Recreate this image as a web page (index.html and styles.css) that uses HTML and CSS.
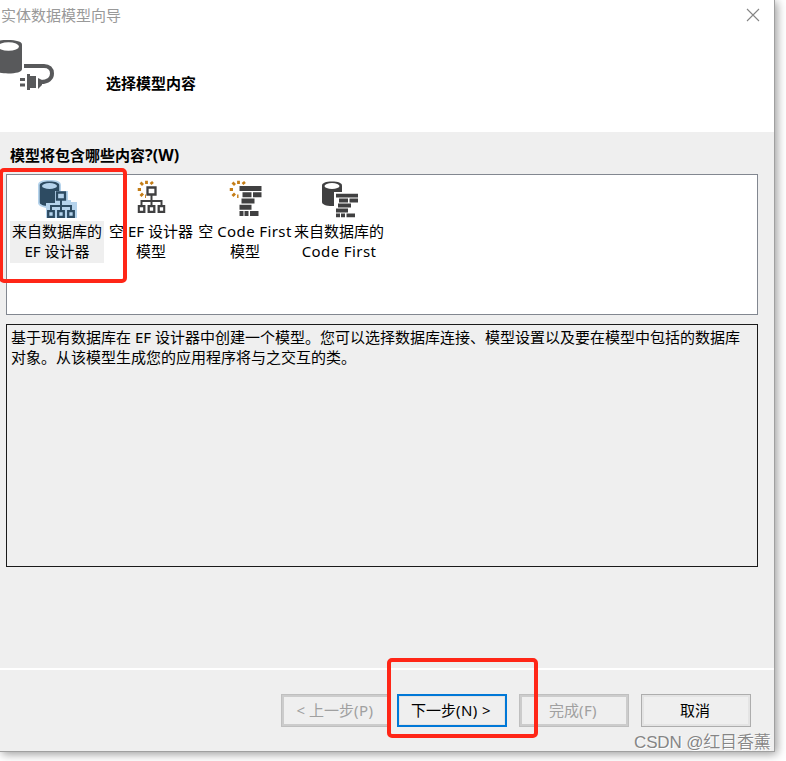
FILE: index.html
```html
<!DOCTYPE html>
<html lang="zh-CN">
<head>
<meta charset="utf-8">
<title>实体数据模型向导</title>
<link rel="stylesheet" href="styles.css">
</head>
<body>
<svg width="0" height="0" class="defs" aria-hidden="true">
  <symbol id="db" viewBox="0 0 20 26">
    <path d="M0 4.500C0 2 4 .5 10 .5S20 2 20 4.500V21c0 2.500-4 4-10 4S0 23.500 0 21Z" fill="currentColor"/>
    <ellipse class="lid" cx="10" cy="5" rx="7.500" ry="3"/>
  </symbol>
  <symbol id="tree" viewBox="0 0 28 28">
    <path d="M14 9v10M4 19v-4h20v4" fill="none" stroke="currentColor" stroke-width="2"/>
    <path class="box" d="M10 1.500h8v7h-8ZM1.200 20.200h5.600v5.600h-5.600ZM11.200 20.200h5.600v5.600h-5.600ZM21.200 20.200h5.600v5.600h-5.600Z" stroke="currentColor" stroke-width="2.300"/>
  </symbol>
  <symbol id="code" viewBox="0 0 24 30">
    <path d="M1 0h22v5H1ZM4 6.300h9v5H4ZM14.500 6.300H23v5h-8.500ZM3 12.500h13v5H3ZM1 18.700h12v5H1ZM1 25h4v5H1ZM6 25h4v5H6ZM11.500 25H20v5h-8.500Z" fill="currentColor"/>
  </symbol>
  <symbol id="spark" viewBox="0 0 18 20">
    <path d="M9 0v3.500M15.500 1.500l-2.500 2M3 2l2.500 2.500M0 9h3.500M3 15.500l2.500-2.500M9 14v3.500" fill="none" stroke="#c47d16" stroke-width="2.800"/>
  </symbol>
</svg>

<main class="dialog">
  <header class="header">
    <div class="titlebar">
      <span class="caption">实体数据模型向导</span>
      <svg class="close" width="14" height="14" viewBox="0 0 14 14"><path d="M1 1l12 12M13 1L1 13" fill="none" stroke="#858585" stroke-width="1.100"/></svg>
    </div>
    <div class="banner">
      <svg class="plug" width="56" height="54" viewBox="0 0 56 54">
        <path d="M-6 6C-6 3 0 2 8 2s14 1.500 14 4.500V31c0 3-6 4.500-14 4.500S-6 34-6 31Z" fill="#58595b"/>
        <ellipse cx="8.500" cy="8.500" rx="10.500" ry="4.300" fill="#fff"/>
        <path d="M24 28h20c5 0 8 3 8 7.500 0 5-4 8.500-11 8.500" fill="none" stroke="#58595b" stroke-width="4"/>
        <path d="M27 36h3v2h6v12h-6v2h-3ZM38 40l4 2v5l-4 4ZM20 40h5v3h-5ZM20 45.500h5v3h-5Z" fill="#58595b"/>
      </svg>
      <h1>选择模型内容</h1>
    </div>
  </header>

  <section class="content">
    <h2>模型将包含哪些内容<span class="tail">?(W)</span></h2>
    <div class="options">
      <div class="option selected">
        <svg class="icon" width="48" height="44" viewBox="0 0 48 44">
          <path d="M5 9c0-4 5-5 11.500-5S28 5 28 9v6h6v9h4v6h6v12H13V32C8 31 5 29 5 27Z" fill="#b5d3ec"/>
          <use href="#db" x="6.500" y="5" width="20" height="26"/>
          <path d="M22 15h13v11h9v16H13V27h9Z" fill="#b5d3ec"/>
          <use href="#tree" x="14" y="15" width="28" height="28"/>
        </svg>
        <span class="name">来自数据库的<br>EF 设计器</span>
      </div>
      <div class="option">
        <svg class="icon" width="48" height="44" viewBox="0 0 48 44">
          <use href="#spark" x="10.500" y="4.500" width="18" height="20"/>
          <path d="M19 9h14v13H19Z" fill="#fff"/>
          <use href="#tree" x="10.500" y="10" width="28" height="28"/>
        </svg>
        <span class="name">空 EF 设计器<br>模型</span>
      </div>
      <div class="option">
        <svg class="icon" width="48" height="44" viewBox="0 0 48 44">
          <use href="#spark" x="8.500" y="4.500" width="18" height="20"/>
          <path d="M17.500 9.500h25v29h-25Z" fill="#fff"/>
          <use href="#code" x="17.500" y="10" width="24" height="30"/>
        </svg>
        <span class="name">空 <span class="wide">Code First</span><br>模型</span>
      </div>
      <div class="option">
        <svg class="icon" width="48" height="44" viewBox="0 0 48 44">
          <use href="#db" x="7" y="5" width="20" height="26"/>
          <path d="M19 16h25v24H19Z" fill="#fff"/>
          <svg x="20" y="17.500" width="24" height="24" viewBox="0 0 24 30" preserveAspectRatio="none"><use href="#code" width="24" height="30"/></svg>
        </svg>
        <span class="name">来自数据库的<br><span class="wide">Code First</span></span>
      </div>
    </div>
    <div class="description">基于现有数据库在 EF 设计器中创建一个模型。您可以选择数据库连接、模型设置以及要在模型中包括的数据库<br>对象。从该模型生成您的应用程序将与之交互的类。</div>
  </section>

  <footer class="footer">
    <button class="disabled" disabled>&lt; 上一步<span class="wide">(P)</span></button>
    <button class="next">下一步<span class="wide">(N) &gt;</span></button>
    <button class="disabled" disabled>完成<span class="wide">(F)</span></button>
    <button>取消</button>
  </footer>
</main>
<div class="mark mark-option"></div>
<div class="mark mark-next"></div>
<div class="watermark">CSDN @红目香薰</div>
</body>
</html>
```
FILE: styles.css
```css
* { box-sizing: border-box; }
body {
  position: relative;
  margin: 0;
  width: 786px;
  height: 761px;
  overflow: hidden;
  background: #fff;
  color: #000;
  font: 400 15px/20px "Noto Sans", "Noto Sans CJK SC", sans-serif;
}
.defs { position: absolute; }
h1, h2 { margin: 0; font-size: 15px; line-height: 20px; font-weight: 700; }
.dialog {
  display: flex;
  flex-direction: column;
  width: 775px;
  height: 752px;
  background: #efefef;
  border: solid #a0a0a0;
  border-width: 0 1px 1px 0;
  box-shadow: 2px 2px 9px rgba(0, 0, 0, .4);
}
.header { height: 132px; background: #fff; }
.titlebar {
  display: flex;
  justify-content: space-between;
  align-items: center;
  height: 30px;
  padding: 0 14px 0 1px;
  color: #999;
}
.banner { display: flex; gap: 50px; padding-top: 8px; }
.banner h1 { margin-top: 35px; }
.content { height: 536px; padding: 13px 16px 0 6px; }
.content h2 { padding-left: 4px; }
.tail { font-size: 16px; letter-spacing: .1px; }
.wide { letter-spacing: .4px; }
.options {
  display: flex;
  height: 141px;
  margin-top: 9px;
  padding-left: 3px;
  background: #fff;
  border: 1px solid #828790;
}
.option {
  display: flex;
  flex-direction: column;
  align-items: center;
  width: 94px;
  height: 90px;
  color: #404041;
}
.icon { flex: none; margin-top: 1px; --fill: #fff; }
.lid, .box { fill: var(--fill); }
.name {
  width: 94px;
  height: 42px;
  margin-top: 1px;
  color: #000;
  text-align: center;
  white-space: nowrap;
}
.selected { color: #2d4b62; }
.selected .icon { --fill: #b5d3ec; }
.selected .name { background: #efefef; }
.description {
  height: 243px;
  margin-top: 9px;
  padding: 2px 4px;
  border: 1px solid #1a1a1a;
  white-space: nowrap;
}
.footer {
  display: flex;
  justify-content: flex-end;
  gap: 12px;
  flex: 1;
  padding: 24px 23px 0 0;
  border-top: 2px solid #fff;
}
button {
  width: 110px;
  height: 33px;
  padding: 0 2px 2px 0;
  color: #000;
  font: inherit;
  background: #efefef;
  border: 1px solid #adadad;
  box-shadow: inset 0 0 0 2px #e4e4e4;
}
button.next { margin-left: -6px; border: 2px solid #0078d7; box-shadow: inset 0 0 0 1px #e4e4e4; }
button.disabled { color: #a0a0a0; border-color: #bfbfbf; box-shadow: inset 0 0 0 2px #ccc; }
.mark { position: absolute; border: 4px solid #ff2617; border-radius: 5px; }
.mark-option { left: -1px; top: 168px; width: 128px; height: 115px; }
.mark-next { left: 387px; top: 658px; width: 151px; height: 80px; }
.watermark {
  position: absolute;
  left: 634px;
  top: 731px;
  color: #858585;
  font: 350 17px/24px "Liberation Sans", "Noto Sans CJK SC", sans-serif;
  letter-spacing: -.15px;
  text-shadow: 1px 1px #fff;
  white-space: nowrap;
}
```
